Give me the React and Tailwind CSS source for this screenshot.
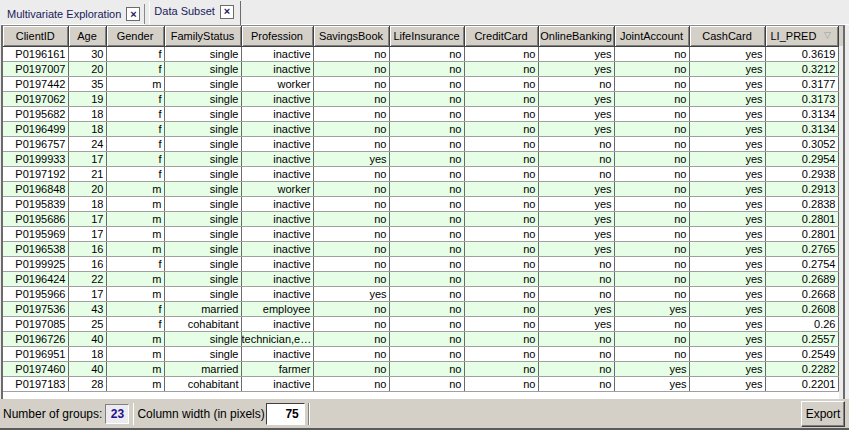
import React from 'react';

const cols = [
  { name: 'ClientID', w: 65 },
  { name: 'Age', w: 38 },
  { name: 'Gender', w: 58 },
  { name: 'FamilyStatus', w: 77 },
  { name: 'Profession', w: 72 },
  { name: 'SavingsBook', w: 76 },
  { name: 'LifeInsurance', w: 75 },
  { name: 'CreditCard', w: 74 },
  { name: 'OnlineBanking', w: 76 },
  { name: 'JointAccount', w: 75 },
  { name: 'CashCard', w: 76 },
  { name: 'LI_PRED', w: 73 },
];

const raw = `P0196161 30 f single inactive no no no yes no yes 0.3619
P0197007 20 f single inactive no no no yes no yes 0.3212
P0197442 35 m single worker no no no no no yes 0.3177
P0197062 19 f single inactive no no no yes no yes 0.3173
P0195682 18 f single inactive no no no yes no yes 0.3134
P0196499 18 f single inactive no no no yes no yes 0.3134
P0196757 24 f single inactive no no no no no yes 0.3052
P0199933 17 f single inactive yes no no no no yes 0.2954
P0197192 21 f single inactive no no no no no yes 0.2938
P0196848 20 m single worker no no no yes no yes 0.2913
P0195839 18 m single inactive no no no yes no yes 0.2838
P0195686 17 m single inactive no no no yes no yes 0.2801
P0195969 17 m single inactive no no no yes no yes 0.2801
P0196538 16 m single inactive no no no yes no yes 0.2765
P0199925 16 f single inactive no no no no no yes 0.2754
P0196424 22 m single inactive no no no no no yes 0.2689
P0195966 17 m single inactive yes no no no no yes 0.2668
P0197536 43 f married employee no no no yes yes yes 0.2608
P0197085 25 f cohabitant inactive no no no yes no yes 0.26
P0196726 40 m single technician,e… no no no no no yes 0.2557
P0196951 18 m single inactive no no no no no yes 0.2549
P0197460 40 m married farmer no no no no yes yes 0.2282
P0197183 28 m cohabitant inactive no no no no yes yes 0.2201`;

const rows = raw.split('\n').map((l) => l.split(' '));

function CloseBox() {
  return (
    <span className="ml-[5px] flex h-[14px] w-[14px] items-center justify-center border border-[#6b6b6b] bg-white text-[11px] font-bold leading-none text-[#1a1a5a]">
      ×
    </span>
  );
}

export default function App() {
  return (
    <div
      className="flex h-[430px] w-[849px] flex-col overflow-hidden bg-[#ececec] text-[11px] text-black"
      style={{ fontFamily: '"Liberation Sans", Arial, sans-serif' }}
    >
      {/* tabs */}
      <div className="flex h-[25px] items-end pl-px">
        <div className="flex h-[21px] items-center border-b border-white pl-[6px] pr-[5px] text-[#1a1a5a] shadow-[inset_-1px_0_0_#8a8a8a]">
          Multivariate Exploration
          <CloseBox />
        </div>
        <div className="ml-[4px] flex h-[24px] items-center border-l border-white pb-[3px] pl-[4px] pr-[7px] text-[#1a1a5a] shadow-[inset_-1px_0_0_#6b6b6b]">
          Data Subset
          <CloseBox />
        </div>
        <div className="h-px flex-1 bg-white" />
      </div>

      {/* table */}
      <div className="ml-px flex h-[374px] w-[844px] border-x-2 border-t border-x-[#6b6b6b] border-t-[#8a8a8a]">
        <div className="flex-1 bg-white">
          <table className="table-fixed border-collapse" style={{ width: 835 }}>
            <colgroup>
              {cols.map((c) => (
                <col key={c.name} style={{ width: c.w }} />
              ))}
            </colgroup>
            <thead>
              <tr className="h-[20px]">
                {cols.map((c, i) => (
                  <th
                    key={c.name}
                    className="border-r border-b border-r-[#404040] border-b-[#404040] bg-[#d4d0c8] p-0 font-normal shadow-[inset_1px_1px_0_#ffffff,inset_-1px_-1px_0_#808080]"
                  >
                    {i === cols.length - 1 ? (
                      <div className="flex items-center justify-between pl-[5px] pr-[7px]">
                        <span>{c.name}</span>
                        <span className="text-[9px] text-[#9a9a9a]">▽</span>
                      </div>
                    ) : (
                      c.name
                    )}
                  </th>
                ))}
              </tr>
            </thead>
            <tbody>
              {rows.map((r, ri) => (
                <tr key={ri} className={ri % 2 ? 'h-[15px] bg-[#e6fde6]' : 'h-[15px] bg-white'}>
                  {r.map((v, ci) => (
                    <td
                      key={ci}
                      className="overflow-hidden whitespace-nowrap border-r border-b border-r-[#6b6b6b] border-b-[#a0a0a0] p-0 pr-[2px] text-right leading-[14px]"
                    >
                      {v}
                    </td>
                  ))}
                </tr>
              ))}
            </tbody>
          </table>
        </div>
        <div className="flex w-[5px] flex-col bg-[#ececec]">
          <div className="h-[20px] bg-[#d4d0c8]" />
        </div>
      </div>

      {/* bottom bar */}
      <div className="flex h-[31px] items-center border-b-2 border-[#5a5a5a] bg-[#d4d0c8] pl-[3px] pr-[4px] text-[12px]">
        <span>Number of groups:</span>
        <span className="ml-[3px] flex h-[20px] w-[24px] items-center justify-center border border-t-[#808080] border-l-[#808080] border-b-white border-r-white bg-[#ecebf2] font-bold text-[#24108a]">
          23
        </span>
        <span className="ml-[4px] h-[22px] w-px bg-white" />
        <span className="ml-[3px]">Column width (in pixels)</span>
        <span className="ml-px flex h-[22px] w-[39px] items-center justify-end border border-t-[#404040] border-l-[#404040] border-b-white border-r-white bg-white pr-[5px] font-bold">
          75
        </span>
        <span className="ml-[3px] h-[22px] w-px bg-[#808080]" />
        <span className="h-[22px] w-px bg-white" />
        <div className="flex-1" />
        <button className="h-[26px] w-[44px] border border-t-white border-l-white border-r-[#404040] border-b-[#404040] bg-[#d4d0c8] text-[12px] shadow-[inset_-1px_-1px_0_#808080]">
          Export
        </button>
      </div>
    </div>
  );
}
